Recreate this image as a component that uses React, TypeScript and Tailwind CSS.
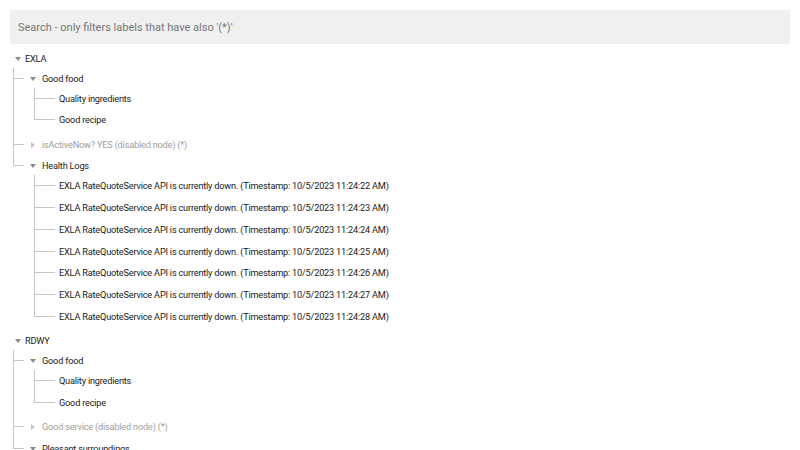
import type { ReactNode } from "react";

type Node = {
  label: string;
  disabled?: boolean;
  children?: Node[];
};

const logs = ["22", "23", "24", "25", "26", "27", "28"].map((s) => ({
  label: `EXLA RateQuoteService API is currently down. (Timestamp: 10/5/2023 11:24:${s} AM)`,
}));

const tree: Node[] = [
  {
    label: "EXLA",
    children: [
      { label: "Good food", children: [{ label: "Quality ingredients" }, { label: "Good recipe" }] },
      { label: "isActiveNow? YES (disabled node) (*)", disabled: true, children: [] },
      { label: "Health Logs", children: logs },
    ],
  },
  {
    label: "RDWY",
    children: [
      { label: "Good food", children: [{ label: "Quality ingredients" }, { label: "Good recipe" }] },
      { label: "Good service (disabled node) (*)", disabled: true, children: [] },
      { label: "Pleasant surroundings", children: [{ label: "Happy atmosphere" }] },
    ],
  },
];

function Caret({ open }: { open: boolean }) {
  if (open) {
    return (
      <svg width="6" height="4" viewBox="0 0 6 4">
        <path d="M0 0h6L3 4z" fill="#8a8a8a" />
      </svg>
    );
  }
  return (
    <svg width="4" height="6" viewBox="0 0 4 6">
      <path d="M0 0l4 3-4 3z" fill="#c4c4c4" />
    </svg>
  );
}

// one child with its elbow connector on the left
function Branch({ last, width, children }: { last: boolean; width: string; children: ReactNode }) {
  return (
    <div className="flex">
      <div className={`flex flex-col shrink-0 ${width}`}>
        <div className="h-[11px] border-l border-b border-[#c6c6c6]" />
        <div className={`flex-1 ${last ? "" : "border-l border-[#c6c6c6]"}`} />
      </div>
      <div className="flex-1 min-w-0">{children}</div>
    </div>
  );
}

function Label({ node }: { node: Node }) {
  return (
    <span className={`whitespace-nowrap ${node.disabled ? "text-[#9e9e9e]" : "text-[#1a1a1a]"}`}>
      {node.label}
    </span>
  );
}

function Leaf({ node }: { node: Node }) {
  return (
    <div className="h-[21.8px] flex items-center pl-[4px]">
      <Label node={node} />
    </div>
  );
}

function SubNode({ node }: { node: Node }) {
  const kids = node.children ?? [];
  const open = kids.length > 0;
  return (
    <div>
      <div className="h-[21.8px] flex items-center">
        <span className="w-[18px] flex justify-center">
          <Caret open={open} />
        </span>
        <Label node={node} />
      </div>
      {open && (
        <div className="-mt-[2px] ml-[10px] pb-[2.5px]">
          {kids.map((k, i) => (
            <Branch key={i} last={i === kids.length - 1} width="w-[21px]">
              <Leaf node={k} />
            </Branch>
          ))}
        </div>
      )}
    </div>
  );
}

function RootNode({ node }: { node: Node }) {
  const kids = node.children ?? [];
  return (
    <div>
      <div className="h-[21.8px] flex items-center">
        <span className="w-[15px] flex justify-center">
          <Caret open />
        </span>
        <Label node={node} />
      </div>
      <div className="-mt-[2px] ml-[3px]">
        {kids.map((k, i) => (
          <Branch key={i} last={i === kids.length - 1} width="w-[11px]">
            <SubNode node={k} />
          </Branch>
        ))}
      </div>
    </div>
  );
}

export default function App() {
  return (
    <div
      className="w-[800px] h-[450px] overflow-hidden bg-white p-[10px] text-[9.2px] tracking-[-0.2px]"
      style={{ fontFamily: "Roboto, 'Noto Sans', sans-serif" }}
    >
      <input
        className="w-full h-[34px] bg-[#f0f0f0] px-[8px] text-[11px] tracking-normal text-[#333] outline-none placeholder:text-[#767676]"
        placeholder="Search - only filters labels that have also '(*)'"
      />
      <div className="mt-[4px]">
        {tree.map((n, i) => (
          <RootNode key={i} node={n} />
        ))}
      </div>
    </div>
  );
}
